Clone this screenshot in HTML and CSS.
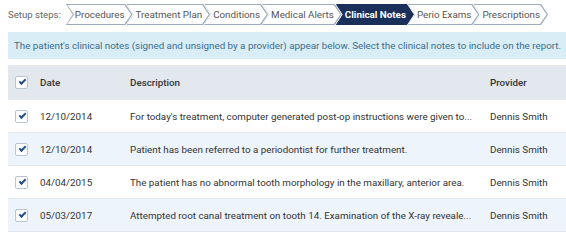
FILE: index.html
```html
<!DOCTYPE html>
<html lang="en">
<head>
    <meta charset="UTF-8">
    <title>Clinical Notes</title>
    <link rel="stylesheet" href="styles.css">
</head>
<body>
    <div class="steps">
        <span class="steps-label">Setup steps:</span>
        <div class="step"><span class="step-inner">Procedures</span></div>
        <div class="step"><span class="step-inner">Treatment Plan</span></div>
        <div class="step"><span class="step-inner">Conditions</span></div>
        <div class="step"><span class="step-inner">Medical Alerts</span></div>
        <div class="step active"><span class="step-inner">Clinical Notes</span></div>
        <div class="step"><span class="step-inner">Perio Exams</span></div>
        <div class="step"><span class="step-inner">Prescriptions</span></div>
    </div>

    <div class="info">
        The patient's clinical notes (signed and unsigned by a provider) appear below. Select the clinical notes to include on the report.
    </div>

    <table class="notes">
        <colgroup>
            <col class="col-check">
            <col class="col-date">
            <col class="col-desc">
            <col>
        </colgroup>
        <thead>
            <tr>
                <th><span class="check"></span></th>
                <th>Date</th>
                <th>Description</th>
                <th>Provider</th>
            </tr>
        </thead>
        <tbody>
            <tr>
                <td><span class="check"></span></td>
                <td>12/10/2014</td>
                <td>For today's treatment, computer generated post-op instructions were given to...</td>
                <td>Dennis Smith</td>
            </tr>
            <tr>
                <td><span class="check"></span></td>
                <td>12/10/2014</td>
                <td>Patient has been referred to a periodontist for further treatment.</td>
                <td>Dennis Smith</td>
            </tr>
            <tr>
                <td><span class="check"></span></td>
                <td>04/04/2015</td>
                <td>The patient has no abnormal tooth morphology in the maxillary, anterior area.</td>
                <td>Dennis Smith</td>
            </tr>
            <tr>
                <td><span class="check"></span></td>
                <td>05/03/2017</td>
                <td>Attempted root canal treatment on tooth 14. Examination of the X-ray reveale...</td>
                <td>Dennis Smith</td>
            </tr>
        </tbody>
    </table>
</body>
</html>
```

FILE: styles.css
```css
body {
    margin: 4px 0 0 8px;
    font-family: Roboto, "Liberation Sans", sans-serif;
    font-size: 9.8px;
    color: #333;
    background-color: #fff;
}
.steps {
    display: flex;
    align-items: center;
    height: 21px;
    white-space: nowrap;
}
.steps-label {
    color: #666;
    font-size: 9.6px;
    margin-right: 5px;
}
.step {
    flex-shrink: 0;
    height: 21px;
    margin-left: -6px;
    background-color: #9eacbb;
    clip-path: polygon(0 0, calc(100% - 7px) 0, 100% 50%, calc(100% - 7px) 100%, 0 100%, 7px 50%);
    display: flex;
}
.step:first-of-type {
    margin-left: 0;
}
.step-inner {
    flex: 1;
    display: flex;
    align-items: center;
    padding: 0 8px 0 9px;
    margin: 1px 0;
    background-color: #fff;
    color: #555;
    font-size: 9.8px;
    clip-path: polygon(0 0, calc(100% - 8px) 0, calc(100% - 1.4px) 50%, calc(100% - 8px) 100%, 0 100%, 7px 50%);
}
.step:first-of-type .step-inner {
    clip-path: polygon(1.4px 0, calc(100% - 8px) 0, calc(100% - 1.4px) 50%, calc(100% - 8px) 100%, 1.4px 100%, 8.4px 50%);
}
.step.active {
    background-color: #1b2f5b;
}
.step.active .step-inner {
    background-color: #1b2f5b;
    color: #fff;
    font-weight: bold;
}
.info {
    margin-top: 7px;
    background-color: #d9edf7;
    color: #3a6d8e;
    padding: 7px 6px;
    line-height: 13px;
    white-space: nowrap;
}
.notes {
    margin-top: 6px;
    width: 100%;
    border-collapse: collapse;
    table-layout: fixed;
}
.col-check {
    width: 32px;
}
.col-date {
    width: 90px;
}
.col-desc {
    width: 360px;
}
.notes th {
    background-color: #e3e8ef;
    font-weight: 500;
    text-align: left;
    height: 35px;
    padding: 0;
    color: #333;
}
.notes td {
    height: 32px;
    padding: 0;
    border-bottom: 1px solid #e3e8ef;
    white-space: nowrap;
    overflow: hidden;
}
.notes tbody tr:nth-child(even) td {
    background-color: #eef4fc;
}
.notes th:first-child,
.notes td:first-child {
    padding-left: 7px;
}
.check {
    display: block;
    width: 11px;
    height: 11px;
    border: 1px solid #b9c5d2;
    border-radius: 2px;
    background-color: #fff;
    position: relative;
}
.check::after {
    content: "";
    position: absolute;
    left: 3px;
    top: 2px;
    width: 5px;
    height: 2px;
    border-left: 2px solid #1f4f8a;
    border-bottom: 2px solid #1f4f8a;
    transform: rotate(-45deg);
}
```
